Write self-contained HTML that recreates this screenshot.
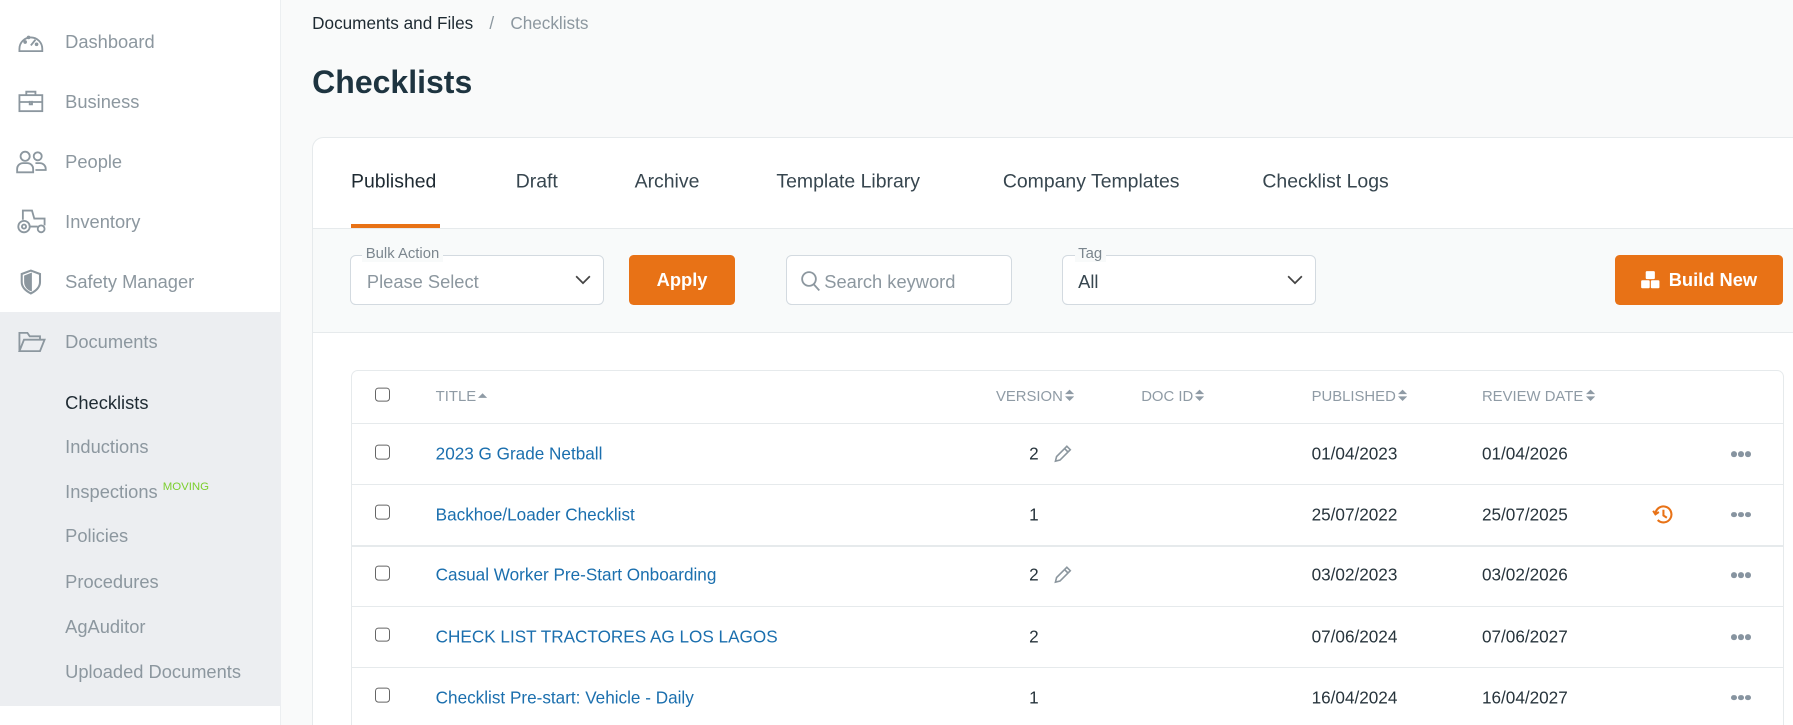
<!DOCTYPE html>
<html><head><meta charset="utf-8"><style>
html{zoom:1.14349;overflow:hidden}
*{box-sizing:border-box;margin:0;padding:0}
body{overflow:hidden;background:#f9fafa;font-family:"Liberation Sans",sans-serif;color:#1e2b33}
#w{position:relative;width:1568px;height:634px;overflow:hidden;background:#f9fafa}
.a{position:absolute;white-space:nowrap}
#side{position:absolute;left:0;top:0;width:246px;height:634px;background:#fff;border-right:1px solid #eceff1}
#docbg{position:absolute;left:0;top:273px;width:246px;height:344px;background:#eceef1}
.nav{font-size:16px;color:#8c979f;transform:translateY(-50%)}
.ic{position:absolute;left:14px;transform:translateY(-50%)}
.sub{left:57px;font-size:16px;color:#8c979f;transform:translateY(-50%)}
.card{position:absolute;left:273px;top:120px;width:1295px;height:514px;background:#fff;border:1px solid #e6eaec;border-right:none;border-bottom:none;border-radius:10px 0 0 0}
.tab{font-size:17px;color:#37464f;transform:translateY(-50%);top:159px}
.band{position:absolute;left:274px;top:199px;width:1294px;height:92px;background:#f8fafa;border-top:1px solid #e6eaec;border-bottom:1px solid #e6eaec}
.box{position:absolute;border:1px solid #d3dae0;border-radius:5px;background:#fff;height:44px;top:223px}
.legend{position:absolute;top:-9px;left:10px;font-size:13px;color:#7b868e;background:#f8fafa;padding:0 3px}
.btn{position:absolute;background:#e87216;border-radius:4px;color:#fff;font-weight:bold;font-size:16px;display:flex;align-items:center;justify-content:center;top:223px;height:44px}
.tbl{position:absolute;left:307px;top:324px;width:1253px;height:310px;background:#fff;border:1px solid #e6eaec;border-bottom:none;border-radius:6px 6px 0 0}
.hd{font-size:13px;color:#8f9ba5;top:347px;transform:translateY(-50%)}
.cb{position:absolute;left:328px;width:13px;height:13px;border:1px solid #666;border-radius:3px;transform:translateY(-50%)}
.line{position:absolute;left:308px;width:1251px;height:1px;background:#e6eaec}
.t{font-size:15px;color:#1b6fae;transform:translateY(-50%);left:381px}
.d{font-size:15px;color:#27343c;transform:translateY(-50%)}
.dots{position:absolute;left:1514px;transform:translateY(-50%);font-size:0}
.dots i{display:inline-block;width:5px;height:5px;border-radius:50%;background:#8794a0;margin-right:1px}
.hd svg{vertical-align:-1px;margin-left:2px}
</style></head><body><div id="w">
<div id="side"></div>
<div id="docbg"></div>
<svg class="ic" style="top:37px" width="26" height="22" viewBox="0 0 26 22" fill="none" stroke="#8c979f" stroke-width="1.6"><path d="M3 17a10 10 0 1 1 20 0v2H3z"/><path d="M13 14l4-5"/><circle cx="8" cy="11" r=".8"/><circle cx="11" cy="7" r=".8"/><circle cx="18" cy="13" r=".8"/></svg>
<svg class="ic" style="top:89px" width="26" height="22" viewBox="0 0 26 22" fill="none" stroke="#8c979f" stroke-width="1.6"><rect x="3" y="5" width="20" height="14"/><path d="M9 5V2h8v3M3 11h20M12 10v3h2v-3"/></svg>
<svg class="ic" style="top:142px" width="28" height="22" viewBox="0 0 28 22" fill="none" stroke="#8c979f" stroke-width="1.6"><circle cx="8" cy="6" r="4"/><circle cx="19" cy="6" r="3.5"/><path d="M1 20v-3a5 5 0 0 1 5-5h4a5 5 0 0 1 5 5v3zM17 12h4a5 5 0 0 1 5 5v1h-9"/></svg>
<svg class="ic" style="top:194px" width="28" height="24" viewBox="0 0 28 24" fill="none" stroke="#8c979f" stroke-width="1.6"><circle cx="7" cy="16" r="5"/><circle cx="7" cy="16" r="1.8"/><circle cx="22" cy="18" r="3"/><path d="M6 10V2h8l2 7h9v6M12 16h7"/></svg>
<svg class="ic" style="top:247px" width="26" height="24" viewBox="0 0 26 24" fill="none" stroke="#8c979f" stroke-width="1.8"><path d="M13 2l8 3v7c0 5-4 8-8 10-4-2-8-5-8-10V5z"/><path d="M13 5v14c-3-1-5-4-5-7V7z" fill="#8c979f"/></svg>
<svg class="ic" style="top:299px" width="26" height="22" viewBox="0 0 26 22" fill="none" stroke="#8c979f" stroke-width="1.6"><path d="M3 19V3h7l2 3h9v3M3 19l4-10h18l-4 10z"/></svg>
<div class="a nav" style="left:57px;top:37px">Dashboard</div>
<div class="a nav" style="left:57px;top:89px">Business</div>
<div class="a nav" style="left:57px;top:142px">People</div>
<div class="a nav" style="left:57px;top:194px">Inventory</div>
<div class="a nav" style="left:57px;top:247px">Safety Manager</div>
<div class="a nav" style="left:57px;top:299px">Documents</div>
<div class="a sub" style="top:352px;color:#1e2a32">Checklists</div>
<div class="a sub" style="top:391px">Inductions</div>
<div class="a sub" style="top:430px">Inspections <sup style="font-size:10px;color:#7ccf2f;vertical-align:7px">MOVING</sup></div>
<div class="a sub" style="top:469px">Policies</div>
<div class="a sub" style="top:509px">Procedures</div>
<div class="a sub" style="top:548px">AgAuditor</div>
<div class="a sub" style="top:588px">Uploaded Documents</div>

<div class="a" style="left:273px;top:11px;font-size:15px;color:#1e2a32">Documents and Files <span style="color:#8c979f;margin:0 10px">/</span> <span style="color:#8c979f">Checklists</span></div>
<div class="a" style="left:273px;top:56px;font-size:28px;font-weight:bold;color:#1e3440">Checklists</div>

<div class="card"></div>
<div class="a tab" style="left:307px;color:#1e2a32">Published</div>
<div class="a" style="left:307px;top:196px;width:78px;height:3px;background:#e87216"></div>
<div class="a tab" style="left:451px">Draft</div>
<div class="a tab" style="left:555px">Archive</div>
<div class="a tab" style="left:679px">Template Library</div>
<div class="a tab" style="left:877px">Company Templates</div>
<div class="a tab" style="left:1104px">Checklist Logs</div>
<div class="band"></div>
<div class="box" style="left:306px;width:222px"><div class="legend">Bulk Action</div><span class="a" style="left:14px;top:13px;font-size:16px;color:#8c979f">Please Select</span><svg class="a" style="left:196px;top:16px" width="14" height="10" viewBox="0 0 14 10" fill="none" stroke="#444" stroke-width="1.5"><path d="M1 2l6 6 6-6"/></svg></div>
<div class="btn" style="left:550px;width:93px">Apply</div>
<div class="box" style="left:687px;width:198px"><svg class="a" style="left:13px;top:13px" width="17" height="18" viewBox="0 0 17 18" fill="none" stroke="#8c979f" stroke-width="1.6"><circle cx="7" cy="7" r="6"/><path d="M11 11.5l5 5.5"/></svg><span class="a" style="left:33px;top:13px;font-size:16px;color:#8c979f">Search keyword</span></div>
<div class="box" style="left:929px;width:222px"><div class="legend">Tag</div><span class="a" style="left:13px;top:13px;font-size:16px;color:#37464f">All</span><svg class="a" style="left:196px;top:16px" width="14" height="10" viewBox="0 0 14 10" fill="none" stroke="#444" stroke-width="1.5"><path d="M1 2l6 6 6-6"/></svg></div>
<div class="btn" style="left:1412px;width:147px"><svg width="18" height="17" viewBox="0 0 18 17" fill="#fff" style="margin-right:7px"><rect x="5" y="1" width="8" height="7" rx="1"/><rect x="1" y="9" width="7.5" height="7" rx="1"/><rect x="9.5" y="9" width="7.5" height="7" rx="1"/></svg>Build New</div>

<div class="tbl"></div>
<div class="cb" style="top:345px"></div>
<div class="a hd" style="left:381px">TITLE<svg width="8" height="10" viewBox="0 0 8 10"><path d="M0 6l4-4 4 4z" fill="#8f9ba5"/></svg></div>
<div class="a hd" style="left:871px">VERSION<svg width="8" height="11" viewBox="0 0 8 11"><path d="M0 4.5l4-4 4 4zM0 6.5l4 4 4-4z" fill="#8f9ba5"/></svg></div>
<div class="a hd" style="left:998px">DOC ID<svg width="8" height="11" viewBox="0 0 8 11"><path d="M0 4.5l4-4 4 4zM0 6.5l4 4 4-4z" fill="#8f9ba5"/></svg></div>
<div class="a hd" style="left:1147px">PUBLISHED<svg width="8" height="11" viewBox="0 0 8 11"><path d="M0 4.5l4-4 4 4zM0 6.5l4 4 4-4z" fill="#8f9ba5"/></svg></div>
<div class="a hd" style="left:1296px">REVIEW DATE<svg width="8" height="11" viewBox="0 0 8 11"><path d="M0 4.5l4-4 4 4zM0 6.5l4 4 4-4z" fill="#8f9ba5"/></svg></div>
<div class="line" style="top:370px"></div>
<div class="line" style="top:423px"></div>
<div class="line" style="top:477px"></div>
<div class="line" style="top:530px"></div>
<div class="line" style="top:583px"></div>

<div class="cb" style="top:395px"></div><div class="a t" style="top:397px">2023 G Grade Netball</div><div class="a d" style="left:900px;top:397px">2</div>
<svg class="a" style="left:920px;top:388px" width="20" height="18" viewBox="0 0 20 18" fill="none" stroke="#8c979f" stroke-width="1.4"><path d="M3 15l1-4 9-9 3 3-9 9zM11 4l3 3"/></svg>
<div class="a d" style="left:1147px;top:397px">01/04/2023</div><div class="a d" style="left:1296px;top:397px">01/04/2026</div><div class="dots" style="top:397px"><i></i><i></i><i></i></div>

<div class="cb" style="top:448px"></div><div class="a t" style="top:450px">Backhoe/Loader Checklist</div><div class="a d" style="left:900px;top:450px">1</div>
<div class="a d" style="left:1147px;top:450px">25/07/2022</div><div class="a d" style="left:1296px;top:450px">25/07/2025</div>
<svg class="a" style="left:1445px;top:441px" width="20" height="19" viewBox="0 0 20 19" fill="none" stroke="#e87216" stroke-width="1.8"><path d="M3 9a7 7 0 1 1 2 5"/><path d="M1 6l2 3 3-2"/><path d="M10 5v5l3 2"/></svg>
<div class="dots" style="top:450px"><i></i><i></i><i></i></div>

<div class="cb" style="top:501px"></div><div class="a t" style="top:503px">Casual Worker Pre-Start Onboarding</div><div class="a d" style="left:900px;top:503px">2</div>
<svg class="a" style="left:920px;top:494px" width="20" height="18" viewBox="0 0 20 18" fill="none" stroke="#8c979f" stroke-width="1.4"><path d="M3 15l1-4 9-9 3 3-9 9zM11 4l3 3"/></svg>
<div class="a d" style="left:1147px;top:503px">03/02/2023</div><div class="a d" style="left:1296px;top:503px">03/02/2026</div><div class="dots" style="top:503px"><i></i><i></i><i></i></div>

<div class="cb" style="top:555px"></div><div class="a t" style="top:557px">CHECK LIST TRACTORES AG LOS LAGOS</div><div class="a d" style="left:900px;top:557px">2</div>
<div class="a d" style="left:1147px;top:557px">07/06/2024</div><div class="a d" style="left:1296px;top:557px">07/06/2027</div><div class="dots" style="top:557px"><i></i><i></i><i></i></div>

<div class="cb" style="top:608px"></div><div class="a t" style="top:610px">Checklist Pre-start: Vehicle - Daily</div><div class="a d" style="left:900px;top:610px">1</div>
<div class="a d" style="left:1147px;top:610px">16/04/2024</div><div class="a d" style="left:1296px;top:610px">16/04/2027</div><div class="dots" style="top:610px"><i></i><i></i><i></i></div>
</div></body></html>
